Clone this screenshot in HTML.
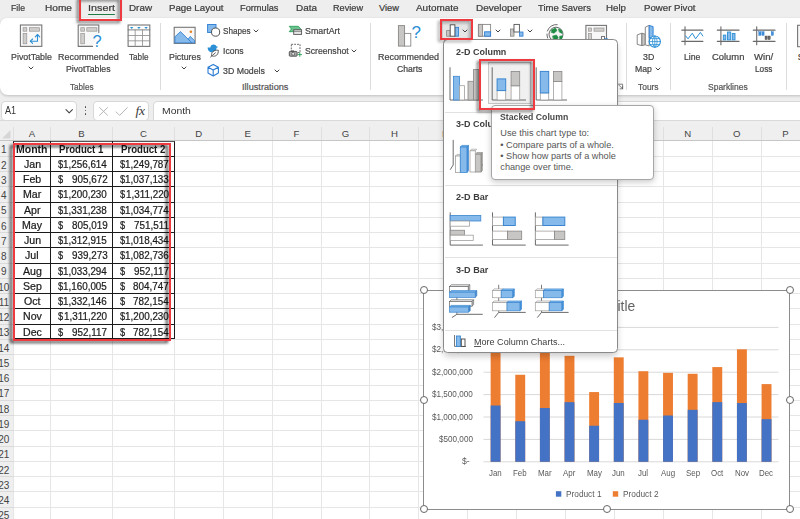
<!DOCTYPE html>
<html lang="en"><head><meta charset="utf-8"><title>Excel - Stacked Column</title>
<style>
html,body{margin:0;padding:0}
body{width:800px;height:519px;overflow:hidden;position:relative;background:#eeeeee;font-family:"Liberation Sans",sans-serif;color:#444}
.t{position:absolute;white-space:pre;transform-origin:0 50%;display:block}
.k{-webkit-text-stroke:0.22px currentColor}
.a{position:absolute;display:block}
svg{position:absolute;overflow:visible}

#ribbon{left:-0.5px;top:18.2px;width:820px;height:76.5px;background:#fff;border-radius:7px 0 0 8px;box-shadow:0 1px 3px rgba(0,0,0,.2)}
.sep{width:1px;background:#dcdcdc;top:22.5px;height:67px}
.box{background:#fff;border:1px solid #d8d8d8;border-radius:4px;box-sizing:border-box}
#grid{left:0;top:141px;width:800px;height:378px;background:#fff}
.gl{background:#e6e6e6}
.hl{background:#cfcfcf}
.cell{font-size:10px}
#dd{left:443.4px;top:39.3px;width:174.6px;height:314.2px;background:#fff;border:1px solid #8a8a8a;border-radius:4.5px;box-sizing:border-box;box-shadow:0 4px 7px -1px rgba(0,0,0,.22)}
#tip{left:491.4px;top:105.2px;width:162.4px;height:75px;background:#fff;border:1px solid #a6a6a6;border-radius:4px;box-sizing:border-box;box-shadow:0 2px 6px rgba(0,0,0,.22)}
.red{border:2px solid #ee3a3f;box-sizing:border-box;box-shadow:-2px 2px 4px rgba(0,0,0,.35)}

</style></head><body>
<span class="t k" style="left:11.00px;top:3px;font-size:9.3px;line-height:10px;color:#3b3b3b;transform:scaleX(0.9342);">File</span>
<span class="t k" style="left:45.00px;top:3px;font-size:9.3px;line-height:10px;color:#3b3b3b;transform:scaleX(1.0883);">Home</span>
<span class="t k" style="left:88.00px;top:3px;font-size:9.3px;line-height:10px;color:#3b3b3b;transform:scaleX(1.1608);">Insert</span>
<span class="t k" style="left:129.00px;top:3px;font-size:9.3px;line-height:10px;color:#3b3b3b;transform:scaleX(1.0598);">Draw</span>
<span class="t k" style="left:168.50px;top:3px;font-size:9.3px;line-height:10px;color:#3b3b3b;transform:scaleX(1.0435);">Page Layout</span>
<span class="t k" style="left:239.50px;top:3px;font-size:9.3px;line-height:10px;color:#3b3b3b;transform:scaleX(0.9933);">Formulas</span>
<span class="t k" style="left:296.00px;top:3px;font-size:9.3px;line-height:10px;color:#3b3b3b;transform:scaleX(1.0690);">Data</span>
<span class="t k" style="left:333.00px;top:3px;font-size:9.3px;line-height:10px;color:#3b3b3b;transform:scaleX(0.9838);">Review</span>
<span class="t k" style="left:379.00px;top:3px;font-size:9.3px;line-height:10px;color:#3b3b3b;">View</span>
<span class="t k" style="left:416.00px;top:3px;font-size:9.3px;line-height:10px;color:#3b3b3b;transform:scaleX(1.0676);">Automate</span>
<span class="t k" style="left:476.00px;top:3px;font-size:9.3px;line-height:10px;color:#3b3b3b;transform:scaleX(1.0733);">Developer</span>
<span class="t k" style="left:537.50px;top:3px;font-size:9.3px;line-height:10px;color:#3b3b3b;transform:scaleX(1.0222);">Time Savers</span>
<span class="t k" style="left:606.00px;top:3px;font-size:9.3px;line-height:10px;color:#3b3b3b;transform:scaleX(1.0456);">Help</span>
<span class="t k" style="left:643.50px;top:3px;font-size:9.3px;line-height:10px;color:#3b3b3b;transform:scaleX(1.0379);">Power Pivot</span>
<div class="a" style="left:88px;top:14px;width:27px;height:1.3px;background:#1e7c46;border-radius:1px"></div>
<div class="a" id="ribbon"></div>
<div class="a sep" style="left:160px"></div>
<div class="a sep" style="left:369.5px"></div>
<div class="a sep" style="left:625.5px"></div>
<div class="a sep" style="left:669.5px"></div>
<div class="a sep" style="left:785.5px"></div>
<span class="t k" style="left:11.00px;top:52px;font-size:9.2px;line-height:10px;transform:scaleX(0.9659);">PivotTable</span>
<span class="t k" style="left:57.80px;top:52px;font-size:9.2px;line-height:10px;transform:scaleX(0.9745);">Recommended</span>
<span class="t k" style="left:65.90px;top:64px;font-size:9.2px;line-height:10px;transform:scaleX(0.9480);">PivotTables</span>
<span class="t k" style="left:129.20px;top:52px;font-size:9.2px;line-height:10px;transform:scaleX(0.8866);">Table</span>
<span class="t k" style="left:70.00px;top:82px;font-size:9.2px;line-height:10px;color:#555;transform:scaleX(0.8836);">Tables</span>
<span class="t k" style="left:168.80px;top:52px;font-size:9.2px;line-height:10px;transform:scaleX(0.9599);">Pictures</span>
<span class="t k" style="left:223.30px;top:26px;font-size:9.2px;line-height:10px;transform:scaleX(0.8813);">Shapes</span>
<span class="t k" style="left:223.30px;top:46px;font-size:9.2px;line-height:10px;transform:scaleX(0.9368);">Icons</span>
<span class="t k" style="left:223.30px;top:66px;font-size:9.2px;line-height:10px;transform:scaleX(0.9551);">3D Models</span>
<span class="t k" style="left:305.00px;top:26px;font-size:9.2px;line-height:10px;transform:scaleX(0.9643);">SmartArt</span>
<span class="t k" style="left:305.00px;top:46px;font-size:9.2px;line-height:10px;transform:scaleX(0.9390);">Screenshot</span>
<span class="t k" style="left:242.00px;top:82px;font-size:9.2px;line-height:10px;color:#555;">Illustrations</span>
<span class="t k" style="left:378.20px;top:52px;font-size:9.2px;line-height:10px;transform:scaleX(0.9793);">Recommended</span>
<span class="t k" style="left:396.60px;top:64px;font-size:9.2px;line-height:10px;transform:scaleX(0.9374);">Charts</span>
<span class="t k" style="left:642.50px;top:52px;font-size:9.2px;line-height:10px;transform:scaleX(0.9566);">3D</span>
<span class="t k" style="left:635.00px;top:64px;font-size:9.2px;line-height:10px;transform:scaleX(0.9443);">Map</span>
<span class="t k" style="left:637.80px;top:82px;font-size:9.2px;line-height:10px;color:#555;transform:scaleX(0.9157);">Tours</span>
<span class="t k" style="left:684.20px;top:52px;font-size:9.2px;line-height:10px;transform:scaleX(0.9428);">Line</span>
<span class="t k" style="left:711.60px;top:52px;font-size:9.2px;line-height:10px;transform:scaleX(1.0220);">Column</span>
<span class="t k" style="left:754.20px;top:52px;font-size:9.2px;line-height:10px;transform:scaleX(1.0435);">Win/</span>
<span class="t k" style="left:755.00px;top:64px;font-size:9.2px;line-height:10px;transform:scaleX(0.8954);">Loss</span>
<span class="t k" style="left:707.80px;top:82px;font-size:9.2px;line-height:10px;color:#555;transform:scaleX(0.9242);">Sparklines</span>
<span class="t k" style="left:797.70px;top:52px;font-size:9.2px;line-height:10px;">S</span>
<svg style="left:27.80px;top:66.00px" width="6.0" height="4.0" viewBox="-3.0 -2.0 6.0 4.0"><path d="M-2.0 -1.0 L0 1.0 L2.0 -1.0" fill="none" stroke="#444" stroke-width="1.0" stroke-linecap="round" stroke-linejoin="round"/></svg>
<svg style="left:181.20px;top:66.00px" width="6.0" height="4.0" viewBox="-3.0 -2.0 6.0 4.0"><path d="M-2.0 -1.0 L0 1.0 L2.0 -1.0" fill="none" stroke="#444" stroke-width="1.0" stroke-linecap="round" stroke-linejoin="round"/></svg>
<svg style="left:252.70px;top:29.30px" width="6.0" height="4.0" viewBox="-3.0 -2.0 6.0 4.0"><path d="M-2.0 -1.0 L0 1.0 L2.0 -1.0" fill="none" stroke="#444" stroke-width="1.0" stroke-linecap="round" stroke-linejoin="round"/></svg>
<svg style="left:274.40px;top:69.00px" width="6.0" height="4.0" viewBox="-3.0 -2.0 6.0 4.0"><path d="M-2.0 -1.0 L0 1.0 L2.0 -1.0" fill="none" stroke="#444" stroke-width="1.0" stroke-linecap="round" stroke-linejoin="round"/></svg>
<svg style="left:350.90px;top:49.30px" width="6.0" height="4.0" viewBox="-3.0 -2.0 6.0 4.0"><path d="M-2.0 -1.0 L0 1.0 L2.0 -1.0" fill="none" stroke="#444" stroke-width="1.0" stroke-linecap="round" stroke-linejoin="round"/></svg>
<svg style="left:463.00px;top:28.70px" width="6.0" height="4.0" viewBox="-3.0 -2.0 6.0 4.0"><path d="M-2.0 -1.0 L0 1.0 L2.0 -1.0" fill="none" stroke="#444" stroke-width="1.0" stroke-linecap="round" stroke-linejoin="round"/></svg>
<svg style="left:494.60px;top:28.70px" width="6.0" height="4.0" viewBox="-3.0 -2.0 6.0 4.0"><path d="M-2.0 -1.0 L0 1.0 L2.0 -1.0" fill="none" stroke="#444" stroke-width="1.0" stroke-linecap="round" stroke-linejoin="round"/></svg>
<svg style="left:526.50px;top:28.70px" width="6.0" height="4.0" viewBox="-3.0 -2.0 6.0 4.0"><path d="M-2.0 -1.0 L0 1.0 L2.0 -1.0" fill="none" stroke="#444" stroke-width="1.0" stroke-linecap="round" stroke-linejoin="round"/></svg>
<svg style="left:654.50px;top:67.00px" width="6.0" height="4.0" viewBox="-3.0 -2.0 6.0 4.0"><path d="M-2.0 -1.0 L0 1.0 L2.0 -1.0" fill="none" stroke="#444" stroke-width="1.0" stroke-linecap="round" stroke-linejoin="round"/></svg>
<svg style="left:0;top:0" width="800" height="100" viewBox="0 0 800 100"><rect x="20.40" y="25.00" width="21.40" height="21.40" fill="#f8f8f8" stroke="#767676" stroke-width="1.1" rx="0" /><rect x="23.10" y="27.70" width="3.70" height="3.50" fill="#d0cecc" stroke="#979593" stroke-width="0.7" rx="0" /><rect x="29.40" y="27.70" width="10.10" height="3.50" fill="#d0cecc" stroke="#979593" stroke-width="0.7" rx="0" /><rect x="23.10" y="33.50" width="3.70" height="10.30" fill="#d0cecc" stroke="#979593" stroke-width="0.7" rx="0" /><path d="M30.40 41.20 L37.50 41.20 L37.50 34.60" fill="none" stroke="#2b8fd6" stroke-width="1.1" stroke-linecap="round" stroke-linejoin="round" /><path d="M32.60 39.00 L30.30 41.20 L32.60 43.40" fill="none" stroke="#2b8fd6" stroke-width="1.1" stroke-linecap="round" stroke-linejoin="round" /><path d="M35.30 36.80 L37.50 34.50 L39.70 36.80" fill="none" stroke="#2b8fd6" stroke-width="1.1" stroke-linecap="round" stroke-linejoin="round" /><path d="M98.8 32.6 V25 H78.2 V46.4 H92.6" fill="#f8f8f8" stroke="#767676" stroke-width="1.1" stroke-linecap="round" stroke-linejoin="round" /><rect x="80.80" y="27.70" width="3.70" height="3.50" fill="#d0cecc" stroke="#979593" stroke-width="0.7" rx="0" /><rect x="86.80" y="27.70" width="10.10" height="3.50" fill="#d0cecc" stroke="#979593" stroke-width="0.7" rx="0" /><rect x="80.80" y="33.50" width="3.70" height="10.30" fill="#d0cecc" stroke="#979593" stroke-width="0.7" rx="0" /><rect x="128.10" y="25.00" width="21.70" height="21.40" fill="#fdfdfd" stroke="#767676" stroke-width="1.1" rx="0" /><path d="M128.10 29.90 L149.80 29.90" fill="none" stroke="#767676" stroke-width="0.9" stroke-linecap="round" stroke-linejoin="round" /><path d="M128.10 35.50 L149.80 35.50" fill="none" stroke="#8a8a8a" stroke-width="0.8" stroke-linecap="round" stroke-linejoin="round" /><path d="M128.10 40.80 L149.80 40.80" fill="none" stroke="#8a8a8a" stroke-width="0.8" stroke-linecap="round" stroke-linejoin="round" /><path d="M135.20 29.90 L135.20 46.40" fill="none" stroke="#8a8a8a" stroke-width="0.8" stroke-linecap="round" stroke-linejoin="round" /><path d="M142.50 29.90 L142.50 46.40" fill="none" stroke="#8a8a8a" stroke-width="0.8" stroke-linecap="round" stroke-linejoin="round" /><path d="M130.00 26.90 L133.40 26.90 L131.70 28.90 Z" fill="#2b8fd6" stroke="none" stroke-width="0.8" stroke-linejoin="round"/><path d="M137.20 26.90 L140.60 26.90 L138.90 28.90 Z" fill="#2b8fd6" stroke="none" stroke-width="0.8" stroke-linejoin="round"/><path d="M144.40 26.90 L147.80 26.90 L146.10 28.90 Z" fill="#2b8fd6" stroke="none" stroke-width="0.8" stroke-linejoin="round"/><rect x="174.20" y="27.30" width="20.90" height="16.10" fill="#f8f8f8" stroke="#767676" stroke-width="1.1" rx="0" /><path d="M174.90 36.80 L180.50 31.60 L188.20 39.20 L190.30 36.40 L194.50 40.60 L194.50 42.80 L174.90 42.80 Z" fill="#85baeb" stroke="#2b7cd3" stroke-width="0.8" stroke-linejoin="round"/><path d="M188.20 39.20 L191.60 42.80" fill="none" stroke="#2b7cd3" stroke-width="0.8" stroke-linecap="round" stroke-linejoin="round" /><circle cx="190.9" cy="31.7" r="1.3" fill="#e8821e"/><rect x="207.60" y="24.50" width="8.40" height="8.00" fill="#85baeb" stroke="#2b7cd3" stroke-width="0.9" rx="0" /><circle cx="215.6" cy="32.1" r="4.1" fill="#fff" stroke="#505050" stroke-width="1"/><path d="M207.6 47.6 H210.4 C210.4 45.4 212 44.4 213.6 44.4 C215 44.4 216 45.2 216.4 46.2 L218.2 46.9 L216.6 47.8 C216.6 50.6 214.6 52.4 212 52.4 C209.4 52.4 207.6 50.4 207.6 47.6 Z" fill="#2b8fd6" stroke="none" stroke-width="0.9" stroke-linecap="round" stroke-linejoin="round" /><path d="M211.6 55.6 C211 52.4 213.4 50 218.3 50.2 C218.6 54.6 216 56.8 212.6 56.2 M210.6 57 L215.4 52.8" fill="#fff" stroke="#505050" stroke-width="0.9" stroke-linecap="round" stroke-linejoin="round" /><path d="M213.2 64.4 L218.4 67.2 V73 L213.2 75.9 L208 73 V67.2 Z M208 67.2 L213.2 70.1 L218.4 67.2 M213.2 70.1 V75.9" fill="#fff" stroke="#2b7cd3" stroke-width="1.1" stroke-linecap="round" stroke-linejoin="round" /><path d="M289.20 26.30 L298.40 26.30 L300.80 29.00 L298.40 31.70 L289.20 31.70 L291.40 29.00 Z" fill="#6cc28e" stroke="#249a52" stroke-width="0.8" stroke-linejoin="round"/><rect x="293.70" y="29.70" width="7.90" height="4.70" fill="#e6e6e6" stroke="#555" stroke-width="0.9" rx="0" /><path d="M294.20 31.30 L301.20 31.30" fill="none" stroke="#555" stroke-width="0.7" stroke-linecap="round" stroke-linejoin="round" /><rect x="291.30" y="44.30" width="8.70" height="8.30" fill="none" stroke="#555" stroke-width="0.9" rx="0" stroke-dasharray="1.8 1.1"/><rect x="289.30" y="51.40" width="7.80" height="4.80" fill="#a8a8a8" stroke="#4a4a4a" stroke-width="0.9" rx="0.8" /><rect x="291.20" y="50.50" width="2.80" height="1.10" fill="#4a4a4a" stroke="none" stroke-width="0" rx="0" /><circle cx="293.2" cy="53.8" r="1.5" fill="#e8e8e8" stroke="#4a4a4a" stroke-width="0.7"/><path d="M299.80 52.80 L299.80 56.40" fill="none" stroke="#249a52" stroke-width="0.9" stroke-linecap="round" stroke-linejoin="round" /><path d="M298.00 54.60 L301.60 54.60" fill="none" stroke="#249a52" stroke-width="0.9" stroke-linecap="round" stroke-linejoin="round" /><rect x="398.40" y="25.60" width="6.20" height="20.50" fill="#c8c6c4" stroke="#8a8886" stroke-width="0.9" rx="0" /><rect x="404.60" y="33.40" width="6.20" height="12.70" fill="#fff" stroke="#8a8886" stroke-width="0.9" rx="0" /><rect x="442.00" y="21.00" width="29.00" height="17.60" fill="#e6e6e6" stroke="#b4b4b4" stroke-width="0.9" rx="1.5" /><rect x="446.60" y="30.60" width="3.60" height="5.60" fill="#c8c6c4" stroke="#8a8886" stroke-width="0.8" rx="0" /><rect x="454.90" y="27.30" width="3.70" height="8.90" fill="#85baeb" stroke="#2b7cd3" stroke-width="0.8" rx="0" /><rect x="450.20" y="24.80" width="4.70" height="11.40" fill="#fff" stroke="#4a4a4a" stroke-width="0.9" rx="0" /><rect x="478.40" y="24.40" width="12.20" height="11.80" fill="#fff" stroke="#8a8886" stroke-width="0.9" rx="0" /><rect x="478.40" y="24.40" width="4.20" height="11.80" fill="#c8c6c4" stroke="#8a8886" stroke-width="0.9" rx="0" /><rect x="484.60" y="31.80" width="6.00" height="4.40" fill="#85baeb" stroke="#2b7cd3" stroke-width="0.9" rx="0" /><rect x="510.40" y="29.00" width="3.60" height="7.20" fill="#c8c6c4" stroke="#8a8886" stroke-width="0.8" rx="0" /><rect x="514.00" y="24.40" width="5.40" height="7.60" fill="#fff" stroke="#555" stroke-width="0.9" rx="0" /><rect x="519.40" y="32.00" width="3.60" height="4.20" fill="#85baeb" stroke="#2b7cd3" stroke-width="0.8" rx="0" /><circle cx="556" cy="34.2" r="7" fill="#f4f4f4" stroke="#5a5a5a" stroke-width="0.9"/><path d="M547.4 31 A9 9 0 0 1 557.2 24.6 M547.6 38 A9 9 0 0 1 547 34" fill="none" stroke="#5a5a5a" stroke-width="0.9" stroke-linecap="round" stroke-linejoin="round" /><path d="M551.4 30 L555.4 28 L557 30.6 L554 33.2 L551.4 32.4 Z M558.6 29 L561.6 30.2 L562.2 33.4 L559.6 32.2 Z M552.8 36 L556.4 35 L558.2 37.6 L556.4 40.6 L553.6 39.4 Z M559.8 36.2 L562.6 35.8 L561.6 39 L559.8 39.2 Z" fill="#1e8c45" stroke="#1e8c45" stroke-width="0.6" stroke-linecap="round" stroke-linejoin="round" /><rect x="585.90" y="25.40" width="20.60" height="21.00" fill="#f8f8f8" stroke="#767676" stroke-width="1.1" rx="0" /><rect x="588.40" y="28.00" width="3.20" height="3.20" fill="#d0cecc" stroke="#979593" stroke-width="0.7" rx="0" /><rect x="594.00" y="28.00" width="10.00" height="3.20" fill="#d0cecc" stroke="#979593" stroke-width="0.7" rx="0" /><rect x="588.40" y="33.60" width="3.20" height="10.20" fill="#d0cecc" stroke="#979593" stroke-width="0.7" rx="0" /><rect x="601.40" y="36.60" width="3.20" height="7.40" fill="#fff" stroke="#555" stroke-width="0.8" rx="0" /><rect x="604.60" y="38.80" width="3.00" height="5.20" fill="#85baeb" stroke="#2b7cd3" stroke-width="0.8" rx="0" /><path d="M618 84.2 H622.6 V88.8 M622.6 88.8 L619.2 85.4 M622.6 86.4 V88.8 H620.2" fill="none" stroke="#666" stroke-width="0.8" stroke-linecap="round" stroke-linejoin="round" /><path d="M637.20 34.90 L641.90 33.20 L641.90 45.60 L637.20 44.40 Z" fill="#fdfdfd" stroke="#7a7a7a" stroke-width="0.9" stroke-linejoin="round"/><path d="M641.90 33.20 L645.30 34.20 L645.30 44.80 L641.90 45.60 Z" fill="#c8c6c4" stroke="#7a7a7a" stroke-width="0.9" stroke-linejoin="round"/><path d="M645.30 27.20 L649.20 25.40 L649.20 46.00 L645.30 44.80 Z" fill="#fdfdfd" stroke="#7a7a7a" stroke-width="0.9" stroke-linejoin="round"/><path d="M649.20 25.40 L653.10 26.60 L653.10 38.00 L649.20 38.00 Z" fill="#85baeb" stroke="#2b7cd3" stroke-width="0.9" stroke-linejoin="round"/><circle cx="654.8" cy="41.6" r="5.6" fill="#fff" stroke="#2b8fd6" stroke-width="1.1"/><path d="M649.2 41.6 H660.4 M654.8 36 V47.2 M650.2 38.6 H659.4 M650.2 44.6 H659.4 M654.8 36 C651.6 38.6 651.6 44.6 654.8 47.2 M654.8 36 C658 38.6 658 44.6 654.8 47.2" fill="none" stroke="#2b8fd6" stroke-width="0.8" stroke-linecap="round" stroke-linejoin="round" /><path d="M685.00 26.80 L685.00 44.80" fill="none" stroke="#6a6a6a" stroke-width="1.1" stroke-linecap="round" stroke-linejoin="round" /><path d="M681.80 30.15 L702.90 30.15" fill="none" stroke="#6a6a6a" stroke-width="1.1" stroke-linecap="round" stroke-linejoin="round" /><path d="M681.80 41.40 L702.90 41.40" fill="none" stroke="#6a6a6a" stroke-width="1.1" stroke-linecap="round" stroke-linejoin="round" /><path d="M685.80 36.00 L688.00 38.80 L692.30 33.20 L695.60 38.80 L700.40 32.40 L702.80 36.00" fill="none" stroke="#2b8fd6" stroke-width="1.0" stroke-linecap="round" stroke-linejoin="round" /><path d="M720.90 26.80 L720.90 44.80" fill="none" stroke="#6a6a6a" stroke-width="1.1" stroke-linecap="round" stroke-linejoin="round" /><path d="M717.30 30.15 L739.00 30.15" fill="none" stroke="#6a6a6a" stroke-width="1.1" stroke-linecap="round" stroke-linejoin="round" /><path d="M717.30 41.40 L739.00 41.40" fill="none" stroke="#6a6a6a" stroke-width="1.1" stroke-linecap="round" stroke-linejoin="round" /><rect x="723.30" y="35.10" width="2.50" height="4.80" fill="#85baeb" stroke="#2b8fd6" stroke-width="0.9" rx="0" /><rect x="727.50" y="32.00" width="3.20" height="7.90" fill="#85baeb" stroke="#2b8fd6" stroke-width="0.9" rx="0" /><rect x="732.30" y="33.50" width="2.70" height="6.40" fill="#85baeb" stroke="#2b8fd6" stroke-width="0.9" rx="0" /><path d="M756.70 26.80 L756.70 44.80" fill="none" stroke="#6a6a6a" stroke-width="1.1" stroke-linecap="round" stroke-linejoin="round" /><path d="M753.30 30.15 L775.00 30.15" fill="none" stroke="#6a6a6a" stroke-width="1.1" stroke-linecap="round" stroke-linejoin="round" /><path d="M753.30 41.40 L775.00 41.40" fill="none" stroke="#6a6a6a" stroke-width="1.1" stroke-linecap="round" stroke-linejoin="round" /><rect x="758.80" y="31.70" width="2.20" height="3.70" fill="#3f8fd8" stroke="#2b7cd3" stroke-width="0.4" rx="0" /><rect x="761.90" y="31.70" width="2.20" height="3.70" fill="#3f8fd8" stroke="#2b7cd3" stroke-width="0.4" rx="0" /><rect x="771.20" y="31.70" width="2.20" height="3.70" fill="#3f8fd8" stroke="#2b7cd3" stroke-width="0.4" rx="0" /><rect x="765.00" y="36.00" width="2.20" height="3.60" fill="#6a6a6a" stroke="#4a4a4a" stroke-width="0.4" rx="0" /><rect x="768.00" y="36.00" width="2.20" height="3.60" fill="#6a6a6a" stroke="#4a4a4a" stroke-width="0.4" rx="0" /><rect x="797.60" y="25.30" width="14.40" height="21.40" fill="#f8f8f8" stroke="#767676" stroke-width="1.1" rx="0" /></svg>
<span class="t" style="left:92.6px;top:33.4px;font-size:16.5px;line-height:17px;color:#2b8fd6">?</span>
<span class="t" style="left:411.6px;top:23.6px;font-size:17px;line-height:17px;color:#2b8fd6">?</span>
<div class="a" style="left:78.8px;top:-3px;width:42.8px;height:23.8px;border:2px solid #ee3b42;box-sizing:border-box;filter:drop-shadow(-2px 2px 1.5px rgba(0,0,0,.6))"></div>
<svg style="left:462.40px;top:28.80px" width="6.0" height="4.0" viewBox="-3.0 -2.0 6.0 4.0"><path d="M-2.0 -1.0 L0 1.0 L2.0 -1.0" fill="none" stroke="#444" stroke-width="1.0" stroke-linecap="round" stroke-linejoin="round"/></svg>
<div class="a box" style="left:0.6px;top:101.2px;width:76.6px;height:19.4px"></div>
<span class="t " style="left:5.20px;top:105px;font-size:10.4px;line-height:11px;color:#333;transform:scaleX(0.8726);">A1</span>
<svg style="left:64.70px;top:108.40px" width="8.4" height="6.4" viewBox="-4.2 -3.2 8.4 6.4"><path d="M-3.2 -1.6 L0 1.6 L3.2 -1.6" fill="none" stroke="#444" stroke-width="1.1" stroke-linecap="round" stroke-linejoin="round"/></svg>
<div class="a" style="left:84.5px;top:106.3px;width:1.8px;height:1.8px;border-radius:1px;background:#444"></div>
<div class="a" style="left:84.5px;top:109.6px;width:1.8px;height:1.8px;border-radius:1px;background:#444"></div>
<div class="a" style="left:84.5px;top:112.9px;width:1.8px;height:1.8px;border-radius:1px;background:#444"></div>
<div class="a box" style="left:93.4px;top:101.2px;width:56px;height:19.4px"></div>
<svg style="left:98.5px;top:106.8px" width="30" height="9" viewBox="0 0 30 9"><path d="M0.3 0.3 L8.8 8.5 M8.8 0.3 L0.3 8.5" stroke="#b6b6b6" stroke-width="1" fill="none"/><path d="M16.8 4.6 L20.6 8.4 L28.6 0.3" stroke="#b6b6b6" stroke-width="1" fill="none"/></svg>
<span class="t" style="left:135.6px;top:103.2px;font-family:'Liberation Serif',serif;font-style:italic;font-size:13.5px;line-height:15px;color:#3a3a3a;letter-spacing:-0.4px">fx</span>
<div class="a box" style="left:152.8px;top:101.2px;width:660px;height:19.4px;border-radius:4px 0 0 0"></div>
<span class="t " style="left:161.50px;top:105px;font-size:9.8px;line-height:11px;color:#333;transform:scaleX(1.0610);">Month</span>
<div class="a" style="left:0;top:120px;width:800px;height:21px;background:#efefef;border-top:1px solid #d9d9d9;border-bottom:1px solid #c6c6c6;box-sizing:border-box"></div>
<div class="a" id="grid"></div>
<div class="a" style="left:0;top:141px;width:13.5px;height:378px;background:#efefef"></div>
<div class="a gl" style="left:13.00px;top:141px;width:1px;height:378px"></div>
<div class="a hl" style="left:13.00px;top:127px;width:1px;height:13px;background:#dfdfdf"></div>
<div class="a gl" style="left:50.00px;top:141px;width:1px;height:378px"></div>
<div class="a hl" style="left:50.00px;top:127px;width:1px;height:13px;background:#dfdfdf"></div>
<div class="a gl" style="left:112.00px;top:141px;width:1px;height:378px"></div>
<div class="a hl" style="left:112.00px;top:127px;width:1px;height:13px;background:#dfdfdf"></div>
<div class="a gl" style="left:173.80px;top:141px;width:1px;height:378px"></div>
<div class="a hl" style="left:173.80px;top:127px;width:1px;height:13px;background:#dfdfdf"></div>
<div class="a gl" style="left:222.70px;top:141px;width:1px;height:378px"></div>
<div class="a hl" style="left:222.70px;top:127px;width:1px;height:13px;background:#dfdfdf"></div>
<div class="a gl" style="left:271.60px;top:141px;width:1px;height:378px"></div>
<div class="a hl" style="left:271.60px;top:127px;width:1px;height:13px;background:#dfdfdf"></div>
<div class="a gl" style="left:320.50px;top:141px;width:1px;height:378px"></div>
<div class="a hl" style="left:320.50px;top:127px;width:1px;height:13px;background:#dfdfdf"></div>
<div class="a gl" style="left:369.40px;top:141px;width:1px;height:378px"></div>
<div class="a hl" style="left:369.40px;top:127px;width:1px;height:13px;background:#dfdfdf"></div>
<div class="a gl" style="left:418.30px;top:141px;width:1px;height:378px"></div>
<div class="a hl" style="left:418.30px;top:127px;width:1px;height:13px;background:#dfdfdf"></div>
<div class="a gl" style="left:467.20px;top:141px;width:1px;height:378px"></div>
<div class="a hl" style="left:467.20px;top:127px;width:1px;height:13px;background:#dfdfdf"></div>
<div class="a gl" style="left:516.10px;top:141px;width:1px;height:378px"></div>
<div class="a hl" style="left:516.10px;top:127px;width:1px;height:13px;background:#dfdfdf"></div>
<div class="a gl" style="left:565.00px;top:141px;width:1px;height:378px"></div>
<div class="a hl" style="left:565.00px;top:127px;width:1px;height:13px;background:#dfdfdf"></div>
<div class="a gl" style="left:613.90px;top:141px;width:1px;height:378px"></div>
<div class="a hl" style="left:613.90px;top:127px;width:1px;height:13px;background:#dfdfdf"></div>
<div class="a gl" style="left:662.80px;top:141px;width:1px;height:378px"></div>
<div class="a hl" style="left:662.80px;top:127px;width:1px;height:13px;background:#dfdfdf"></div>
<div class="a gl" style="left:711.70px;top:141px;width:1px;height:378px"></div>
<div class="a hl" style="left:711.70px;top:127px;width:1px;height:13px;background:#dfdfdf"></div>
<div class="a gl" style="left:760.60px;top:141px;width:1px;height:378px"></div>
<div class="a hl" style="left:760.60px;top:127px;width:1px;height:13px;background:#dfdfdf"></div>
<div class="a gl" style="left:809.50px;top:141px;width:1px;height:378px"></div>
<div class="a hl" style="left:809.50px;top:127px;width:1px;height:13px;background:#dfdfdf"></div>
<div class="a gl" style="left:13.5px;top:155.75px;width:800px;height:1px"></div>
<div class="a" style="left:0;top:155.75px;width:13.5px;height:1px;background:#dadada"></div>
<span class="t " style="left:1.02px;top:144px;font-size:10px;line-height:11px;">1</span>
<div class="a gl" style="left:13.5px;top:171.00px;width:800px;height:1px"></div>
<div class="a" style="left:0;top:171.00px;width:13.5px;height:1px;background:#dadada"></div>
<span class="t " style="left:1.02px;top:160px;font-size:10px;line-height:11px;">2</span>
<div class="a gl" style="left:13.5px;top:186.25px;width:800px;height:1px"></div>
<div class="a" style="left:0;top:186.25px;width:13.5px;height:1px;background:#dadada"></div>
<span class="t " style="left:1.02px;top:175px;font-size:10px;line-height:11px;">3</span>
<div class="a gl" style="left:13.5px;top:201.50px;width:800px;height:1px"></div>
<div class="a" style="left:0;top:201.50px;width:13.5px;height:1px;background:#dadada"></div>
<span class="t " style="left:1.02px;top:190px;font-size:10px;line-height:11px;">4</span>
<div class="a gl" style="left:13.5px;top:216.75px;width:800px;height:1px"></div>
<div class="a" style="left:0;top:216.75px;width:13.5px;height:1px;background:#dadada"></div>
<span class="t " style="left:1.02px;top:205px;font-size:10px;line-height:11px;">5</span>
<div class="a gl" style="left:13.5px;top:232.00px;width:800px;height:1px"></div>
<div class="a" style="left:0;top:232.00px;width:13.5px;height:1px;background:#dadada"></div>
<span class="t " style="left:1.02px;top:221px;font-size:10px;line-height:11px;">6</span>
<div class="a gl" style="left:13.5px;top:247.25px;width:800px;height:1px"></div>
<div class="a" style="left:0;top:247.25px;width:13.5px;height:1px;background:#dadada"></div>
<span class="t " style="left:1.02px;top:236px;font-size:10px;line-height:11px;">7</span>
<div class="a gl" style="left:13.5px;top:262.50px;width:800px;height:1px"></div>
<div class="a" style="left:0;top:262.50px;width:13.5px;height:1px;background:#dadada"></div>
<span class="t " style="left:1.02px;top:251px;font-size:10px;line-height:11px;">8</span>
<div class="a gl" style="left:13.5px;top:277.75px;width:800px;height:1px"></div>
<div class="a" style="left:0;top:277.75px;width:13.5px;height:1px;background:#dadada"></div>
<span class="t " style="left:1.02px;top:266px;font-size:10px;line-height:11px;">9</span>
<div class="a gl" style="left:13.5px;top:293.00px;width:800px;height:1px"></div>
<div class="a" style="left:0;top:293.00px;width:13.5px;height:1px;background:#dadada"></div>
<span class="t " style="left:-1.76px;top:282px;font-size:10px;line-height:11px;">10</span>
<div class="a gl" style="left:13.5px;top:308.25px;width:800px;height:1px"></div>
<div class="a" style="left:0;top:308.25px;width:13.5px;height:1px;background:#dadada"></div>
<span class="t " style="left:-1.39px;top:297px;font-size:10px;line-height:11px;">11</span>
<div class="a gl" style="left:13.5px;top:323.50px;width:800px;height:1px"></div>
<div class="a" style="left:0;top:323.50px;width:13.5px;height:1px;background:#dadada"></div>
<span class="t " style="left:-1.76px;top:312px;font-size:10px;line-height:11px;">12</span>
<div class="a gl" style="left:13.5px;top:338.75px;width:800px;height:1px"></div>
<div class="a" style="left:0;top:338.75px;width:13.5px;height:1px;background:#dadada"></div>
<span class="t " style="left:-1.76px;top:327px;font-size:10px;line-height:11px;">13</span>
<div class="a gl" style="left:13.5px;top:354.00px;width:800px;height:1px"></div>
<div class="a" style="left:0;top:354.00px;width:13.5px;height:1px;background:#dadada"></div>
<span class="t " style="left:-1.76px;top:343px;font-size:10px;line-height:11px;">14</span>
<div class="a gl" style="left:13.5px;top:369.25px;width:800px;height:1px"></div>
<div class="a" style="left:0;top:369.25px;width:13.5px;height:1px;background:#dadada"></div>
<span class="t " style="left:-1.76px;top:358px;font-size:10px;line-height:11px;">15</span>
<div class="a gl" style="left:13.5px;top:384.50px;width:800px;height:1px"></div>
<div class="a" style="left:0;top:384.50px;width:13.5px;height:1px;background:#dadada"></div>
<span class="t " style="left:-1.76px;top:373px;font-size:10px;line-height:11px;">16</span>
<div class="a gl" style="left:13.5px;top:399.75px;width:800px;height:1px"></div>
<div class="a" style="left:0;top:399.75px;width:13.5px;height:1px;background:#dadada"></div>
<span class="t " style="left:-1.76px;top:388px;font-size:10px;line-height:11px;">17</span>
<div class="a gl" style="left:13.5px;top:415.00px;width:800px;height:1px"></div>
<div class="a" style="left:0;top:415.00px;width:13.5px;height:1px;background:#dadada"></div>
<span class="t " style="left:-1.76px;top:404px;font-size:10px;line-height:11px;">18</span>
<div class="a gl" style="left:13.5px;top:430.25px;width:800px;height:1px"></div>
<div class="a" style="left:0;top:430.25px;width:13.5px;height:1px;background:#dadada"></div>
<span class="t " style="left:-1.76px;top:419px;font-size:10px;line-height:11px;">19</span>
<div class="a gl" style="left:13.5px;top:445.50px;width:800px;height:1px"></div>
<div class="a" style="left:0;top:445.50px;width:13.5px;height:1px;background:#dadada"></div>
<span class="t " style="left:-1.76px;top:434px;font-size:10px;line-height:11px;">20</span>
<div class="a gl" style="left:13.5px;top:460.75px;width:800px;height:1px"></div>
<div class="a" style="left:0;top:460.75px;width:13.5px;height:1px;background:#dadada"></div>
<span class="t " style="left:-1.76px;top:449px;font-size:10px;line-height:11px;">21</span>
<div class="a gl" style="left:13.5px;top:476.00px;width:800px;height:1px"></div>
<div class="a" style="left:0;top:476.00px;width:13.5px;height:1px;background:#dadada"></div>
<span class="t " style="left:-1.76px;top:465px;font-size:10px;line-height:11px;">22</span>
<div class="a gl" style="left:13.5px;top:491.25px;width:800px;height:1px"></div>
<div class="a" style="left:0;top:491.25px;width:13.5px;height:1px;background:#dadada"></div>
<span class="t " style="left:-1.76px;top:480px;font-size:10px;line-height:11px;">23</span>
<div class="a gl" style="left:13.5px;top:506.50px;width:800px;height:1px"></div>
<div class="a" style="left:0;top:506.50px;width:13.5px;height:1px;background:#dadada"></div>
<span class="t " style="left:-1.76px;top:495px;font-size:10px;line-height:11px;">24</span>
<div class="a gl" style="left:13.5px;top:521.75px;width:800px;height:1px"></div>
<div class="a" style="left:0;top:521.75px;width:13.5px;height:1px;background:#dadada"></div>
<span class="t " style="left:-1.76px;top:510px;font-size:10px;line-height:11px;">25</span>
<span class="t " style="left:28.80px;top:128px;font-size:9.6px;line-height:11px;">A</span>
<span class="t " style="left:78.30px;top:128px;font-size:9.6px;line-height:11px;">B</span>
<span class="t " style="left:139.93px;top:128px;font-size:9.6px;line-height:11px;">C</span>
<span class="t " style="left:195.28px;top:128px;font-size:9.6px;line-height:11px;">D</span>
<span class="t " style="left:244.45px;top:128px;font-size:9.6px;line-height:11px;">E</span>
<span class="t " style="left:293.62px;top:128px;font-size:9.6px;line-height:11px;">F</span>
<span class="t " style="left:341.72px;top:128px;font-size:9.6px;line-height:11px;">G</span>
<span class="t " style="left:390.88px;top:128px;font-size:9.6px;line-height:11px;">H</span>
<span class="t " style="left:441.92px;top:128px;font-size:9.6px;line-height:11px;">I</span>
<span class="t " style="left:489.75px;top:128px;font-size:9.6px;line-height:11px;">J</span>
<span class="t " style="left:537.85px;top:128px;font-size:9.6px;line-height:11px;">K</span>
<span class="t " style="left:587.28px;top:128px;font-size:9.6px;line-height:11px;">L</span>
<span class="t " style="left:634.85px;top:128px;font-size:9.6px;line-height:11px;">M</span>
<span class="t " style="left:684.28px;top:128px;font-size:9.6px;line-height:11px;">N</span>
<span class="t " style="left:732.92px;top:128px;font-size:9.6px;line-height:11px;">O</span>
<span class="t " style="left:782.35px;top:128px;font-size:9.6px;line-height:11px;">P</span>
<svg style="left:2px;top:129.5px" width="9" height="9" viewBox="0 0 9 9"><path d="M8.5 0 V8.5 H0 Z" fill="#d6d6d6"/></svg>
<div class="a" style="left:13px;top:140.5px;width:161.8px;height:198.45px;border:1px solid #1a1a1a;border-top-color:#555;box-sizing:border-box;background:#fff"></div>
<div class="a" style="left:50.0px;top:141px;width:1px;height:198.25px;background:#1a1a1a"></div>
<div class="a" style="left:112.0px;top:141px;width:1px;height:198.25px;background:#1a1a1a"></div>
<div class="a" style="left:13.5px;top:155.75px;width:160.8px;height:1px;background:#1a1a1a"></div>
<div class="a" style="left:13.5px;top:171.00px;width:160.8px;height:1px;background:#1a1a1a"></div>
<div class="a" style="left:13.5px;top:186.25px;width:160.8px;height:1px;background:#1a1a1a"></div>
<div class="a" style="left:13.5px;top:201.50px;width:160.8px;height:1px;background:#1a1a1a"></div>
<div class="a" style="left:13.5px;top:216.75px;width:160.8px;height:1px;background:#1a1a1a"></div>
<div class="a" style="left:13.5px;top:232.00px;width:160.8px;height:1px;background:#1a1a1a"></div>
<div class="a" style="left:13.5px;top:247.25px;width:160.8px;height:1px;background:#1a1a1a"></div>
<div class="a" style="left:13.5px;top:262.50px;width:160.8px;height:1px;background:#1a1a1a"></div>
<div class="a" style="left:13.5px;top:277.75px;width:160.8px;height:1px;background:#1a1a1a"></div>
<div class="a" style="left:13.5px;top:293.00px;width:160.8px;height:1px;background:#1a1a1a"></div>
<div class="a" style="left:13.5px;top:308.25px;width:160.8px;height:1px;background:#1a1a1a"></div>
<div class="a" style="left:13.5px;top:323.50px;width:160.8px;height:1px;background:#1a1a1a"></div>
<span class="t " style="left:16.45px;top:144px;font-size:10px;line-height:11px;font-weight:700;color:#1c1c1c;transform:scaleX(1.0505);">Month</span>
<span class="t " style="left:59.45px;top:144px;font-size:10px;line-height:11px;font-weight:700;color:#1c1c1c;transform:scaleX(0.9605);">Product 1</span>
<span class="t " style="left:121.25px;top:144px;font-size:10px;line-height:11px;font-weight:700;color:#1c1c1c;transform:scaleX(0.9605);">Product 2</span>
<span class="t k" style="left:23.65px;top:159px;font-size:10px;line-height:11px;color:#1c1c1c;transform:scaleX(1.0600);">Jan</span>
<span class="t k" style="left:57.60px;top:159px;font-size:10px;line-height:11px;color:#1c1c1c;transform:scaleX(0.9200);">$</span>
<span class="t k" style="left:63.38px;top:159px;font-size:10px;line-height:11px;color:#1c1c1c;transform:scaleX(0.9850);">1,256,614</span>
<span class="t k" style="left:119.60px;top:159px;font-size:10px;line-height:11px;color:#1c1c1c;transform:scaleX(0.9200);">$</span>
<span class="t k" style="left:125.18px;top:159px;font-size:10px;line-height:11px;color:#1c1c1c;transform:scaleX(0.9850);">1,249,787</span>
<span class="t k" style="left:23.07px;top:174px;font-size:10px;line-height:11px;color:#1c1c1c;transform:scaleX(1.0600);">Feb</span>
<span class="t k" style="left:57.60px;top:174px;font-size:10px;line-height:11px;color:#1c1c1c;transform:scaleX(0.9200);">$</span>
<span class="t k" style="left:71.59px;top:174px;font-size:10px;line-height:11px;color:#1c1c1c;transform:scaleX(0.9850);">905,672</span>
<span class="t k" style="left:119.60px;top:174px;font-size:10px;line-height:11px;color:#1c1c1c;transform:scaleX(0.9200);">$</span>
<span class="t k" style="left:125.18px;top:174px;font-size:10px;line-height:11px;color:#1c1c1c;transform:scaleX(0.9850);">1,037,133</span>
<span class="t k" style="left:23.07px;top:189px;font-size:10px;line-height:11px;color:#1c1c1c;transform:scaleX(1.0600);">Mar</span>
<span class="t k" style="left:57.60px;top:189px;font-size:10px;line-height:11px;color:#1c1c1c;transform:scaleX(0.9200);">$</span>
<span class="t k" style="left:63.38px;top:189px;font-size:10px;line-height:11px;color:#1c1c1c;transform:scaleX(0.9850);">1,200,230</span>
<span class="t k" style="left:119.60px;top:189px;font-size:10px;line-height:11px;color:#1c1c1c;transform:scaleX(0.9200);">$</span>
<span class="t k" style="left:125.91px;top:189px;font-size:10px;line-height:11px;color:#1c1c1c;transform:scaleX(0.9850);">1,311,220</span>
<span class="t k" style="left:23.95px;top:205px;font-size:10px;line-height:11px;color:#1c1c1c;transform:scaleX(1.0600);">Apr</span>
<span class="t k" style="left:57.60px;top:205px;font-size:10px;line-height:11px;color:#1c1c1c;transform:scaleX(0.9200);">$</span>
<span class="t k" style="left:63.38px;top:205px;font-size:10px;line-height:11px;color:#1c1c1c;transform:scaleX(0.9850);">1,331,238</span>
<span class="t k" style="left:119.60px;top:205px;font-size:10px;line-height:11px;color:#1c1c1c;transform:scaleX(0.9200);">$</span>
<span class="t k" style="left:125.18px;top:205px;font-size:10px;line-height:11px;color:#1c1c1c;transform:scaleX(0.9850);">1,034,774</span>
<span class="t k" style="left:22.19px;top:220px;font-size:10px;line-height:11px;color:#1c1c1c;transform:scaleX(1.0600);">May</span>
<span class="t k" style="left:57.60px;top:220px;font-size:10px;line-height:11px;color:#1c1c1c;transform:scaleX(0.9200);">$</span>
<span class="t k" style="left:71.59px;top:220px;font-size:10px;line-height:11px;color:#1c1c1c;transform:scaleX(0.9850);">805,019</span>
<span class="t k" style="left:119.60px;top:220px;font-size:10px;line-height:11px;color:#1c1c1c;transform:scaleX(0.9200);">$</span>
<span class="t k" style="left:134.12px;top:220px;font-size:10px;line-height:11px;color:#1c1c1c;transform:scaleX(0.9850);">751,511</span>
<span class="t k" style="left:23.65px;top:235px;font-size:10px;line-height:11px;color:#1c1c1c;transform:scaleX(1.0600);">Jun</span>
<span class="t k" style="left:57.60px;top:235px;font-size:10px;line-height:11px;color:#1c1c1c;transform:scaleX(0.9200);">$</span>
<span class="t k" style="left:63.38px;top:235px;font-size:10px;line-height:11px;color:#1c1c1c;transform:scaleX(0.9850);">1,312,915</span>
<span class="t k" style="left:119.60px;top:235px;font-size:10px;line-height:11px;color:#1c1c1c;transform:scaleX(0.9200);">$</span>
<span class="t k" style="left:125.18px;top:235px;font-size:10px;line-height:11px;color:#1c1c1c;transform:scaleX(0.9850);">1,018,434</span>
<span class="t k" style="left:25.42px;top:250px;font-size:10px;line-height:11px;color:#1c1c1c;transform:scaleX(1.0600);">Jul</span>
<span class="t k" style="left:57.60px;top:250px;font-size:10px;line-height:11px;color:#1c1c1c;transform:scaleX(0.9200);">$</span>
<span class="t k" style="left:71.59px;top:250px;font-size:10px;line-height:11px;color:#1c1c1c;transform:scaleX(0.9850);">939,273</span>
<span class="t k" style="left:119.60px;top:250px;font-size:10px;line-height:11px;color:#1c1c1c;transform:scaleX(0.9200);">$</span>
<span class="t k" style="left:125.18px;top:250px;font-size:10px;line-height:11px;color:#1c1c1c;transform:scaleX(0.9850);">1,082,736</span>
<span class="t k" style="left:22.77px;top:266px;font-size:10px;line-height:11px;color:#1c1c1c;transform:scaleX(1.0600);">Aug</span>
<span class="t k" style="left:57.60px;top:266px;font-size:10px;line-height:11px;color:#1c1c1c;transform:scaleX(0.9200);">$</span>
<span class="t k" style="left:63.38px;top:266px;font-size:10px;line-height:11px;color:#1c1c1c;transform:scaleX(0.9850);">1,033,294</span>
<span class="t k" style="left:119.60px;top:266px;font-size:10px;line-height:11px;color:#1c1c1c;transform:scaleX(0.9200);">$</span>
<span class="t k" style="left:134.12px;top:266px;font-size:10px;line-height:11px;color:#1c1c1c;transform:scaleX(0.9850);">952,117</span>
<span class="t k" style="left:22.77px;top:281px;font-size:10px;line-height:11px;color:#1c1c1c;transform:scaleX(1.0600);">Sep</span>
<span class="t k" style="left:57.60px;top:281px;font-size:10px;line-height:11px;color:#1c1c1c;transform:scaleX(0.9200);">$</span>
<span class="t k" style="left:63.38px;top:281px;font-size:10px;line-height:11px;color:#1c1c1c;transform:scaleX(0.9850);">1,160,005</span>
<span class="t k" style="left:119.60px;top:281px;font-size:10px;line-height:11px;color:#1c1c1c;transform:scaleX(0.9200);">$</span>
<span class="t k" style="left:133.39px;top:281px;font-size:10px;line-height:11px;color:#1c1c1c;transform:scaleX(0.9850);">804,747</span>
<span class="t k" style="left:23.96px;top:296px;font-size:10px;line-height:11px;color:#1c1c1c;transform:scaleX(1.0600);">Oct</span>
<span class="t k" style="left:57.60px;top:296px;font-size:10px;line-height:11px;color:#1c1c1c;transform:scaleX(0.9200);">$</span>
<span class="t k" style="left:63.38px;top:296px;font-size:10px;line-height:11px;color:#1c1c1c;transform:scaleX(0.9850);">1,332,146</span>
<span class="t k" style="left:119.60px;top:296px;font-size:10px;line-height:11px;color:#1c1c1c;transform:scaleX(0.9200);">$</span>
<span class="t k" style="left:133.39px;top:296px;font-size:10px;line-height:11px;color:#1c1c1c;transform:scaleX(0.9850);">782,154</span>
<span class="t k" style="left:22.77px;top:311px;font-size:10px;line-height:11px;color:#1c1c1c;transform:scaleX(1.0600);">Nov</span>
<span class="t k" style="left:57.60px;top:311px;font-size:10px;line-height:11px;color:#1c1c1c;transform:scaleX(0.9200);">$</span>
<span class="t k" style="left:64.11px;top:311px;font-size:10px;line-height:11px;color:#1c1c1c;transform:scaleX(0.9850);">1,311,220</span>
<span class="t k" style="left:119.60px;top:311px;font-size:10px;line-height:11px;color:#1c1c1c;transform:scaleX(0.9200);">$</span>
<span class="t k" style="left:125.18px;top:311px;font-size:10px;line-height:11px;color:#1c1c1c;transform:scaleX(0.9850);">1,200,230</span>
<span class="t k" style="left:22.77px;top:327px;font-size:10px;line-height:11px;color:#1c1c1c;transform:scaleX(1.0600);">Dec</span>
<span class="t k" style="left:57.60px;top:327px;font-size:10px;line-height:11px;color:#1c1c1c;transform:scaleX(0.9200);">$</span>
<span class="t k" style="left:72.32px;top:327px;font-size:10px;line-height:11px;color:#1c1c1c;transform:scaleX(0.9850);">952,117</span>
<span class="t k" style="left:119.60px;top:327px;font-size:10px;line-height:11px;color:#1c1c1c;transform:scaleX(0.9200);">$</span>
<span class="t k" style="left:133.39px;top:327px;font-size:10px;line-height:11px;color:#1c1c1c;transform:scaleX(0.9850);">782,154</span>
<div class="a" style="left:13.3px;top:142.6px;width:157.5px;height:198px;border:2px solid #ee3b42;box-sizing:border-box;filter:drop-shadow(-2.4px 2px 1.6px rgba(0,0,0,.8))"></div>
<div class="a" style="left:423.40px;top:289.80px;width:367.00px;height:220.20px;background:#fff;border:1.2px solid #8c8c8c;box-sizing:border-box"></div>
<span class="t " style="left:572.00px;top:298px;font-size:14px;line-height:16px;color:#636363;transform:scaleX(0.9906);">Chart Title</span>
<span class="t " style="left:462.00px;top:456px;font-size:8.8px;line-height:10px;color:#595959;transform:scaleX(0.9840);">$-</span>
<span class="t " style="left:439.15px;top:434px;font-size:8.8px;line-height:10px;color:#595959;transform:scaleX(0.9250);">$500,000</span>
<span class="t " style="left:432.36px;top:412px;font-size:8.8px;line-height:10px;color:#595959;transform:scaleX(0.9250);">$1,000,000</span>
<span class="t " style="left:432.36px;top:389px;font-size:8.8px;line-height:10px;color:#595959;transform:scaleX(0.9250);">$1,500,000</span>
<span class="t " style="left:432.36px;top:367px;font-size:8.8px;line-height:10px;color:#595959;transform:scaleX(0.9250);">$2,000,000</span>
<span class="t " style="left:432.36px;top:344px;font-size:8.8px;line-height:10px;color:#595959;transform:scaleX(0.9250);">$2,500,000</span>
<span class="t " style="left:432.36px;top:322px;font-size:8.8px;line-height:10px;color:#595959;transform:scaleX(0.9250);">$3,000,000</span>
<span class="t " style="left:489.22px;top:468px;font-size:8.8px;line-height:10px;color:#595959;transform:scaleX(0.9000);">Jan</span>
<span class="t " style="left:513.41px;top:468px;font-size:8.8px;line-height:10px;color:#595959;transform:scaleX(0.9000);">Feb</span>
<span class="t " style="left:538.04px;top:468px;font-size:8.8px;line-height:10px;color:#595959;transform:scaleX(0.9000);">Mar</span>
<span class="t " style="left:563.33px;top:468px;font-size:8.8px;line-height:10px;color:#595959;transform:scaleX(0.9000);">Apr</span>
<span class="t " style="left:586.64px;top:468px;font-size:8.8px;line-height:10px;color:#595959;transform:scaleX(0.9000);">May</span>
<span class="t " style="left:612.37px;top:468px;font-size:8.8px;line-height:10px;color:#595959;transform:scaleX(0.9000);">Jun</span>
<span class="t " style="left:638.32px;top:468px;font-size:8.8px;line-height:10px;color:#595959;transform:scaleX(0.9000);">Jul</span>
<span class="t " style="left:660.96px;top:468px;font-size:8.8px;line-height:10px;color:#595959;transform:scaleX(0.9000);">Aug</span>
<span class="t " style="left:685.59px;top:468px;font-size:8.8px;line-height:10px;color:#595959;transform:scaleX(0.9000);">Sep</span>
<span class="t " style="left:711.11px;top:468px;font-size:8.8px;line-height:10px;color:#595959;transform:scaleX(0.9000);">Oct</span>
<span class="t " style="left:734.86px;top:468px;font-size:8.8px;line-height:10px;color:#595959;transform:scaleX(0.9000);">Nov</span>
<span class="t " style="left:759.49px;top:468px;font-size:8.8px;line-height:10px;color:#595959;transform:scaleX(0.9000);">Dec</span>
<svg style="left:0;top:0" width="800" height="519" viewBox="0 0 800 519"><rect x="483.5" y="461.30" width="295" height="1" fill="#d9d9d9"/><rect x="483.5" y="438.90" width="295" height="1" fill="#d9d9d9"/><rect x="483.5" y="416.50" width="295" height="1" fill="#d9d9d9"/><rect x="483.5" y="394.10" width="295" height="1" fill="#d9d9d9"/><rect x="483.5" y="371.70" width="295" height="1" fill="#d9d9d9"/><rect x="483.5" y="349.30" width="295" height="1" fill="#d9d9d9"/><rect x="483.5" y="326.90" width="295" height="1" fill="#d9d9d9"/><rect x="490.65" y="349.51" width="9.9" height="112.29" fill="#ed7d31"/><rect x="490.65" y="405.50" width="9.9" height="56.30" fill="#4472c4"/><rect x="515.28" y="374.76" width="9.9" height="87.04" fill="#ed7d31"/><rect x="515.28" y="421.23" width="9.9" height="40.57" fill="#4472c4"/><rect x="539.91" y="349.29" width="9.9" height="112.51" fill="#ed7d31"/><rect x="539.91" y="408.03" width="9.9" height="53.77" fill="#4472c4"/><rect x="564.54" y="355.80" width="9.9" height="106.00" fill="#ed7d31"/><rect x="564.54" y="402.16" width="9.9" height="59.64" fill="#4472c4"/><rect x="589.17" y="392.07" width="9.9" height="69.73" fill="#ed7d31"/><rect x="589.17" y="425.74" width="9.9" height="36.06" fill="#4472c4"/><rect x="613.80" y="357.36" width="9.9" height="104.44" fill="#ed7d31"/><rect x="613.80" y="402.98" width="9.9" height="58.82" fill="#4472c4"/><rect x="638.43" y="371.21" width="9.9" height="90.59" fill="#ed7d31"/><rect x="638.43" y="419.72" width="9.9" height="42.08" fill="#4472c4"/><rect x="663.06" y="372.85" width="9.9" height="88.95" fill="#ed7d31"/><rect x="663.06" y="415.51" width="9.9" height="46.29" fill="#4472c4"/><rect x="687.69" y="373.78" width="9.9" height="88.02" fill="#ed7d31"/><rect x="687.69" y="409.83" width="9.9" height="51.97" fill="#4472c4"/><rect x="712.32" y="367.08" width="9.9" height="94.72" fill="#ed7d31"/><rect x="712.32" y="402.12" width="9.9" height="59.68" fill="#4472c4"/><rect x="736.95" y="349.29" width="9.9" height="112.51" fill="#ed7d31"/><rect x="736.95" y="403.06" width="9.9" height="58.74" fill="#4472c4"/><rect x="761.58" y="384.10" width="9.9" height="77.70" fill="#ed7d31"/><rect x="761.58" y="419.15" width="9.9" height="42.65" fill="#4472c4"/></svg>
<span class="t " style="left:565.50px;top:489px;font-size:8.8px;line-height:10px;color:#595959;transform:scaleX(0.9425);">Product 1</span>
<svg style="left:0;top:0" width="800" height="519" viewBox="0 0 800 519"><rect x="555.9" y="491.2" width="5.4" height="5.5" fill="#4472c4"/><rect x="612.8" y="491.2" width="5.4" height="5.5" fill="#ed7d31"/></svg>
<span class="t " style="left:622.50px;top:489px;font-size:8.8px;line-height:10px;color:#595959;transform:scaleX(0.9425);">Product 2</span>
<div class="a" style="left:420.00px;top:286.40px;width:8px;height:8px;border-radius:50%;background:#fff;border:1.3px solid #666;box-sizing:border-box"></div>
<div class="a" style="left:602.90px;top:286.40px;width:8px;height:8px;border-radius:50%;background:#fff;border:1.3px solid #666;box-sizing:border-box"></div>
<div class="a" style="left:785.80px;top:286.40px;width:8px;height:8px;border-radius:50%;background:#fff;border:1.3px solid #666;box-sizing:border-box"></div>
<div class="a" style="left:420.00px;top:395.90px;width:8px;height:8px;border-radius:50%;background:#fff;border:1.3px solid #666;box-sizing:border-box"></div>
<div class="a" style="left:785.80px;top:395.90px;width:8px;height:8px;border-radius:50%;background:#fff;border:1.3px solid #666;box-sizing:border-box"></div>
<div class="a" style="left:420.00px;top:505.40px;width:8px;height:8px;border-radius:50%;background:#fff;border:1.3px solid #666;box-sizing:border-box"></div>
<div class="a" style="left:602.90px;top:505.40px;width:8px;height:8px;border-radius:50%;background:#fff;border:1.3px solid #666;box-sizing:border-box"></div>
<div class="a" style="left:785.80px;top:505.40px;width:8px;height:8px;border-radius:50%;background:#fff;border:1.3px solid #666;box-sizing:border-box"></div>
<div class="a" id="dd"></div>
<span class="t " style="left:455.80px;top:47px;font-size:9.2px;line-height:10px;font-weight:700;color:#3d3d3d;transform:scaleX(0.9764);">2-D Column</span>
<span class="t " style="left:455.80px;top:119px;font-size:9.2px;line-height:10px;font-weight:700;color:#3d3d3d;transform:scaleX(0.9764);">3-D Column</span>
<span class="t " style="left:455.80px;top:192px;font-size:9.2px;line-height:10px;font-weight:700;color:#3d3d3d;transform:scaleX(0.9871);">2-D Bar</span>
<span class="t " style="left:455.80px;top:265px;font-size:9.2px;line-height:10px;font-weight:700;color:#3d3d3d;transform:scaleX(0.9871);">3-D Bar</span>
<div class="a" style="left:445px;top:112.0px;width:171.5px;height:1px;background:#e1e1e1"></div>
<div class="a" style="left:445px;top:185.0px;width:171.5px;height:1px;background:#e1e1e1"></div>
<div class="a" style="left:445px;top:257.0px;width:171.5px;height:1px;background:#e1e1e1"></div>
<div class="a" style="left:445px;top:329.5px;width:171.5px;height:1px;background:#e1e1e1"></div>
<div class="a" style="left:488px;top:62px;width:43px;height:42px;background:#f0f0f0;border:1px solid #c6c6c6;box-sizing:border-box"></div>
<svg style="left:0;top:0" width="800" height="519" viewBox="0 0 800 519"><path d="M450.00 67.30 L450.00 100.00 L482.90 100.00" fill="none" stroke="#5a5a5a" stroke-width="0.9"/><rect x="453.50" y="76.30" width="6.00" height="23.70" fill="#85baeb" stroke="#3a86d1" stroke-width="0.8"/><rect x="459.50" y="85.70" width="5.00" height="14.30" fill="#fff" stroke="#a19f9d" stroke-width="0.8"/><rect x="468.00" y="81.30" width="5.40" height="18.70" fill="#c8c6c4" stroke="#8a8886" stroke-width="0.8"/><rect x="473.40" y="69.60" width="5.40" height="30.40" fill="#c8c6c4" stroke="#8a8886" stroke-width="0.8"/><path d="M492.20 67.30 L492.20 100.00 L526.00 100.00" fill="none" stroke="#5a5a5a" stroke-width="0.9"/><rect x="497.10" y="90.60" width="8.60" height="9.40" fill="#fff" stroke="#a19f9d" stroke-width="0.8"/><rect x="497.10" y="78.90" width="8.60" height="11.70" fill="#85baeb" stroke="#3a86d1" stroke-width="1"/><rect x="511.10" y="85.80" width="8.60" height="14.20" fill="#fff" stroke="#a19f9d" stroke-width="0.8"/><rect x="511.10" y="71.40" width="8.60" height="14.40" fill="#c8c6c4" stroke="#8a8886" stroke-width="0.8"/><path d="M536.20 67.30 L536.20 100.00 L567.00 100.00" fill="none" stroke="#5a5a5a" stroke-width="0.9"/><rect x="540.30" y="92.90" width="8.40" height="7.10" fill="#fff" stroke="#a19f9d" stroke-width="0.8"/><rect x="540.30" y="71.40" width="8.40" height="21.50" fill="#85baeb" stroke="#3a86d1" stroke-width="1"/><rect x="553.50" y="81.60" width="8.40" height="18.40" fill="#fff" stroke="#a19f9d" stroke-width="0.8"/><rect x="553.50" y="71.40" width="8.40" height="10.20" fill="#c8c6c4" stroke="#8a8886" stroke-width="0.8"/><path d="M453.20 139.90 L453.20 165.00 L450.20 169.70" fill="none" stroke="#5a5a5a" stroke-width="0.9"/><path d="M478.00 165.00 L483.00 165.00" fill="none" stroke="#5a5a5a" stroke-width="0.9"/><path d="M455.50 156.00 L457.00 154.40 L461.80 154.40 L460.30 156.00 Z" fill="#fff" stroke="#a19f9d" stroke-width="0.7" stroke-linejoin="round"/><rect x="455.50" y="156.00" width="4.80" height="16.40" fill="#fff" stroke="#a19f9d" stroke-width="0.8"/><path d="M470.00 150.80 L471.50 149.20 L476.80 149.20 L475.30 150.80 Z" fill="#fff" stroke="#a19f9d" stroke-width="0.7" stroke-linejoin="round"/><path d="M475.30 154.20 L476.80 152.60 L482.30 152.60 L481.00 154.20 Z" fill="#c8c6c4" stroke="#8a8886" stroke-width="0.7" stroke-linejoin="round"/><path d="M481.00 154.20 L482.30 152.60 L482.30 170.40 L481.00 172.00 Z" fill="#a9a7a5" stroke="#8a8886" stroke-width="0.7" stroke-linejoin="round"/><rect x="475.30" y="154.20" width="5.70" height="17.80" fill="#c8c6c4" stroke="#8a8886" stroke-width="0.8"/><rect x="470.00" y="150.80" width="5.30" height="21.20" fill="#fff" stroke="#a19f9d" stroke-width="0.8"/><path d="M460.30 147.00 L461.80 145.40 L468.50 145.40 L467.00 147.00 Z" fill="#85baeb" stroke="#3a86d1" stroke-width="0.7" stroke-linejoin="round"/><path d="M467.00 147.00 L468.50 145.40 L468.50 170.80 L467.00 172.40 Z" fill="#4d96dd" stroke="#3a86d1" stroke-width="0.7" stroke-linejoin="round"/><rect x="460.30" y="147.00" width="6.70" height="25.40" fill="#85baeb" stroke="#3a86d1" stroke-width="0.8"/><path d="M450.20 212.40 L450.20 245.10 L482.90 245.10" fill="none" stroke="#5a5a5a" stroke-width="0.9"/><rect x="450.20" y="215.40" width="30.60" height="5.60" fill="#85baeb" stroke="#3a86d1" stroke-width="0.8"/><rect x="450.20" y="221.00" width="19.20" height="5.20" fill="#fff" stroke="#a19f9d" stroke-width="0.8"/><rect x="450.20" y="230.25" width="14.30" height="4.95" fill="#c8c6c4" stroke="#8a8886" stroke-width="0.8"/><rect x="450.20" y="235.20" width="23.05" height="5.20" fill="#fff" stroke="#a19f9d" stroke-width="0.8"/><path d="M492.50 212.40 L492.50 245.10 L525.75 245.10" fill="none" stroke="#5a5a5a" stroke-width="0.9"/><rect x="492.50" y="217.10" width="10.90" height="8.40" fill="#fff" stroke="#a19f9d" stroke-width="0.8"/><rect x="503.40" y="217.10" width="11.85" height="8.40" fill="#85baeb" stroke="#3a86d1" stroke-width="1"/><rect x="492.50" y="231.10" width="14.90" height="8.30" fill="#fff" stroke="#a19f9d" stroke-width="0.8"/><rect x="507.40" y="231.10" width="14.30" height="8.30" fill="#c8c6c4" stroke="#8a8886" stroke-width="0.8"/><path d="M535.40 212.40 L535.40 245.10 L568.60 245.10" fill="none" stroke="#5a5a5a" stroke-width="0.9"/><rect x="535.40" y="217.10" width="7.50" height="8.40" fill="#fff" stroke="#a19f9d" stroke-width="0.8"/><rect x="542.90" y="217.10" width="21.90" height="8.40" fill="#85baeb" stroke="#3a86d1" stroke-width="1"/><rect x="535.40" y="231.10" width="19.20" height="8.30" fill="#fff" stroke="#a19f9d" stroke-width="0.8"/><rect x="554.60" y="231.10" width="10.20" height="8.30" fill="#c8c6c4" stroke="#8a8886" stroke-width="0.8"/><path d="M456.90 284.80 L456.90 314.30" fill="none" stroke="#5a5a5a" stroke-width="0.8"/><path d="M451.90 317.60 L456.90 314.30 L482.75 314.30" fill="none" stroke="#5a5a5a" stroke-width="0.9"/><path d="M449.60 286.40 L451.20 284.80 L469.80 284.80 L468.20 286.40 Z" fill="#fff" stroke="#666" stroke-width="0.7" stroke-linejoin="round"/><path d="M468.20 286.40 L469.80 284.80 L469.80 289.80 L468.20 291.40 Z" fill="#e6e6e6" stroke="#666" stroke-width="0.7" stroke-linejoin="round"/><rect x="449.60" y="286.40" width="18.60" height="5.00" fill="#fff" stroke="#666" stroke-width="0.7"/><path d="M449.60 292.20 L451.20 290.60 L476.80 290.60 L475.20 292.20 Z" fill="#85baeb" stroke="#3a86d1" stroke-width="0.7" stroke-linejoin="round"/><path d="M475.20 292.20 L476.80 290.60 L476.80 295.80 L475.20 297.40 Z" fill="#4a7fb5" stroke="#3a86d1" stroke-width="0.7" stroke-linejoin="round"/><rect x="449.60" y="292.20" width="25.60" height="5.20" fill="#85baeb" stroke="#3a86d1" stroke-width="0.7"/><path d="M449.60 301.40 L451.20 299.80 L473.60 299.80 L472.00 301.40 Z" fill="#fff" stroke="#666" stroke-width="0.7" stroke-linejoin="round"/><path d="M472.00 301.40 L473.60 299.80 L473.60 304.60 L472.00 306.20 Z" fill="#e6e6e6" stroke="#666" stroke-width="0.7" stroke-linejoin="round"/><rect x="449.60" y="301.40" width="22.40" height="4.80" fill="#fff" stroke="#666" stroke-width="0.7"/><path d="M449.60 307.00 L451.20 305.40 L470.20 305.40 L468.60 307.00 Z" fill="#85baeb" stroke="#3a86d1" stroke-width="0.7" stroke-linejoin="round"/><path d="M468.60 307.00 L470.20 305.40 L470.20 310.60 L468.60 312.20 Z" fill="#4a7fb5" stroke="#3a86d1" stroke-width="0.7" stroke-linejoin="round"/><rect x="449.60" y="307.00" width="19.00" height="5.20" fill="#85baeb" stroke="#3a86d1" stroke-width="0.7"/><path d="M498.70 284.80 L498.70 312.40" fill="none" stroke="#5a5a5a" stroke-width="0.8"/><path d="M494.50 317.60 L498.70 312.40 L525.70 312.40" fill="none" stroke="#5a5a5a" stroke-width="0.9"/><path d="M492.40 290.50 L494.00 288.90 L502.80 288.90 L501.20 290.50 Z" fill="#fff" stroke="#a19f9d" stroke-width="0.7" stroke-linejoin="round"/><path d="M501.20 290.50 L502.80 288.90 L502.80 296.15 L501.20 297.75 Z" fill="#e6e6e6" stroke="#a19f9d" stroke-width="0.7" stroke-linejoin="round"/><rect x="492.40" y="290.50" width="8.80" height="7.25" fill="#fff" stroke="#a19f9d" stroke-width="0.7"/><path d="M501.20 290.50 L502.80 288.90 L514.30 288.90 L512.70 290.50 Z" fill="#85baeb" stroke="#3a86d1" stroke-width="0.7" stroke-linejoin="round"/><path d="M512.70 290.50 L514.30 288.90 L514.30 296.15 L512.70 297.75 Z" fill="#4d96dd" stroke="#3a86d1" stroke-width="0.7" stroke-linejoin="round"/><rect x="501.20" y="290.50" width="11.50" height="7.25" fill="#85baeb" stroke="#3a86d1" stroke-width="0.7"/><path d="M492.40 302.60 L494.00 301.00 L508.60 301.00 L507.00 302.60 Z" fill="#fff" stroke="#a19f9d" stroke-width="0.7" stroke-linejoin="round"/><path d="M507.00 302.60 L508.60 301.00 L508.60 309.20 L507.00 310.80 Z" fill="#e6e6e6" stroke="#a19f9d" stroke-width="0.7" stroke-linejoin="round"/><rect x="492.40" y="302.60" width="14.60" height="8.20" fill="#fff" stroke="#a19f9d" stroke-width="0.7"/><path d="M507.00 302.60 L508.60 301.00 L521.50 301.00 L519.90 302.60 Z" fill="#85baeb" stroke="#3a86d1" stroke-width="0.7" stroke-linejoin="round"/><path d="M519.90 302.60 L521.50 301.00 L521.50 309.20 L519.90 310.80 Z" fill="#4d96dd" stroke="#3a86d1" stroke-width="0.7" stroke-linejoin="round"/><rect x="507.00" y="302.60" width="12.90" height="8.20" fill="#85baeb" stroke="#3a86d1" stroke-width="0.7"/><path d="M541.50 284.80 L541.50 312.40" fill="none" stroke="#5a5a5a" stroke-width="0.8"/><path d="M537.30 317.60 L541.50 312.40 L568.60 312.40" fill="none" stroke="#5a5a5a" stroke-width="0.9"/><path d="M535.30 290.50 L536.90 288.90 L545.00 288.90 L543.40 290.50 Z" fill="#fff" stroke="#a19f9d" stroke-width="0.7" stroke-linejoin="round"/><path d="M543.40 290.50 L545.00 288.90 L545.00 296.15 L543.40 297.75 Z" fill="#e6e6e6" stroke="#a19f9d" stroke-width="0.7" stroke-linejoin="round"/><rect x="535.30" y="290.50" width="8.10" height="7.25" fill="#fff" stroke="#a19f9d" stroke-width="0.7"/><path d="M543.40 290.50 L545.00 288.90 L563.40 288.90 L561.80 290.50 Z" fill="#85baeb" stroke="#3a86d1" stroke-width="0.7" stroke-linejoin="round"/><path d="M561.80 290.50 L563.40 288.90 L563.40 296.15 L561.80 297.75 Z" fill="#4d96dd" stroke="#3a86d1" stroke-width="0.7" stroke-linejoin="round"/><rect x="543.40" y="290.50" width="18.40" height="7.25" fill="#85baeb" stroke="#3a86d1" stroke-width="0.7"/><path d="M535.30 302.60 L536.90 301.00 L550.80 301.00 L549.20 302.60 Z" fill="#fff" stroke="#a19f9d" stroke-width="0.7" stroke-linejoin="round"/><path d="M549.20 302.60 L550.80 301.00 L550.80 309.20 L549.20 310.80 Z" fill="#e6e6e6" stroke="#a19f9d" stroke-width="0.7" stroke-linejoin="round"/><rect x="535.30" y="302.60" width="13.90" height="8.20" fill="#fff" stroke="#a19f9d" stroke-width="0.7"/><path d="M549.20 302.60 L550.80 301.00 L563.40 301.00 L561.80 302.60 Z" fill="#85baeb" stroke="#3a86d1" stroke-width="0.7" stroke-linejoin="round"/><path d="M561.80 302.60 L563.40 301.00 L563.40 309.20 L561.80 310.80 Z" fill="#4d96dd" stroke="#3a86d1" stroke-width="0.7" stroke-linejoin="round"/><rect x="549.20" y="302.60" width="12.60" height="8.20" fill="#85baeb" stroke="#3a86d1" stroke-width="0.7"/><path d="M454.50 335.00 L454.50 346.40 L466.00 346.40" fill="none" stroke="#555" stroke-width="0.8"/><rect x="456.40" y="336.00" width="4.00" height="10.40" fill="#85baeb" stroke="#3a86d1" stroke-width="0.9"/><rect x="461.30" y="339.00" width="3.70" height="7.40" fill="#fff" stroke="#444" stroke-width="0.9"/></svg>
<span class="t " style="left:473.70px;top:337px;font-size:9.2px;line-height:10px;color:#3d3d3d;transform:scaleX(0.9844);">More Column Charts...</span>
<div class="a" style="left:473.7px;top:346px;width:7.6px;height:1px;background:#5a5a5a"></div>
<div class="a" id="tip"></div>
<span class="t " style="left:500.30px;top:112px;font-size:9.2px;line-height:10px;font-weight:700;color:#4a4a4a;transform:scaleX(0.9475);">Stacked Column</span>
<span class="t " style="left:500.30px;top:128px;font-size:9.2px;line-height:10px;color:#555;">Use this chart type to:</span>
<span class="t " style="left:500.30px;top:140px;font-size:9.2px;line-height:10px;color:#555;">• Compare parts of a whole.</span>
<span class="t " style="left:500.30px;top:151px;font-size:9.2px;line-height:10px;color:#555;">• Show how parts of a whole</span>
<span class="t " style="left:500.30px;top:162px;font-size:9.2px;line-height:10px;color:#555;">change over time.</span>
<div class="a" style="left:479.4px;top:58.6px;width:55.8px;height:51px;border:2px solid #ee3b42;box-sizing:border-box;filter:drop-shadow(-2px 2px 1.5px rgba(0,0,0,.6))"></div>
<div class="a" style="left:440.2px;top:19.2px;width:32.8px;height:21.2px;border:2px solid #ee3b42;box-sizing:border-box;filter:drop-shadow(-2px 2px 1.5px rgba(0,0,0,.36))"></div>
</body></html>
